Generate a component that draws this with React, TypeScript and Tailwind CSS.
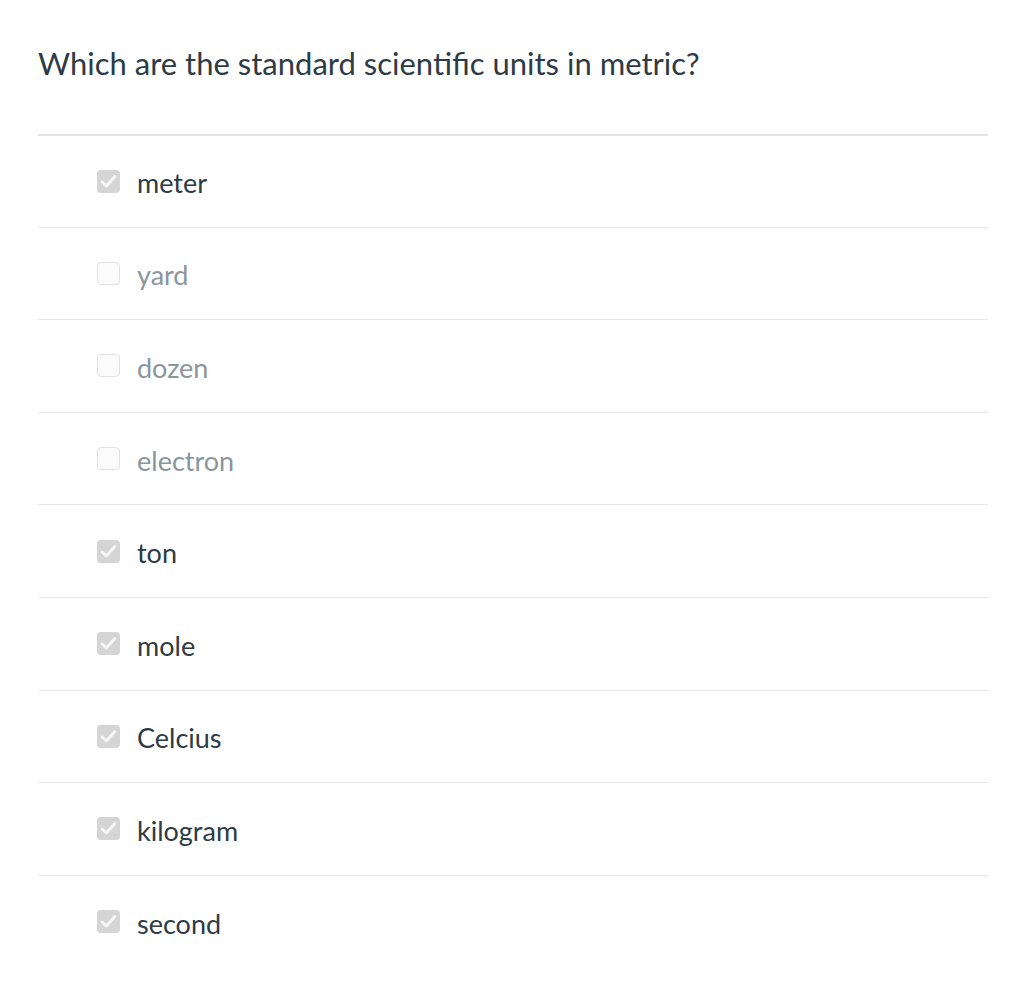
import React from "react";

const items: { label: string; checked: boolean }[] = [
  { label: "meter", checked: true },
  { label: "yard", checked: false },
  { label: "dozen", checked: false },
  { label: "electron", checked: false },
  { label: "ton", checked: true },
  { label: "mole", checked: true },
  { label: "Celcius", checked: true },
  { label: "kilogram", checked: true },
  { label: "second", checked: true },
];

function Box({ checked }: { checked: boolean }) {
  if (checked) {
    return (
      <div className="w-[23px] h-[23px] rounded-[4px] bg-[#d5d5d5] flex items-center justify-center shrink-0">
        <svg width="17" height="15" viewBox="0 0 17 15">
          <path d="M2.2 8 L6.4 12 L14.8 2.6" stroke="#f6f6f6" strokeWidth="3" fill="none" strokeLinecap="round" strokeLinejoin="round" />
        </svg>
      </div>
    );
  }
  return <div className="w-[23px] h-[23px] rounded-[4px] border-[1.5px] border-[#e2e2e2] bg-[#fbfbfb] shrink-0" />;
}

export default function App() {
  return (
    <div className="bg-white w-[1024px] h-[996px] px-[38px]" style={{ fontFamily: "Lato, 'Noto Sans', sans-serif" }}>
      <div className="pt-[42px] h-[134px] text-[31px] leading-[42px] text-[#2d3b45]">
        Which are the standard scientific units in metric?
      </div>
      <div className="w-[950px]">
        {items.map((it, i) => (
          <div
            key={it.label}
            className={`h-[92.6px] flex items-center pl-[59px] ${i === 0 ? "border-t-2 border-[#e3e3e3]" : "border-t-[1.5px] border-[#e8e8e8]"}`}
          >
            <Box checked={it.checked} />
            <span className={`ml-[17px] text-[27px] leading-none pt-[3px] ${it.checked ? "text-[#2d3b45]" : "text-[#8b959c]"}`}>
              {it.label}
            </span>
          </div>
        ))}
      </div>
    </div>
  );
}
